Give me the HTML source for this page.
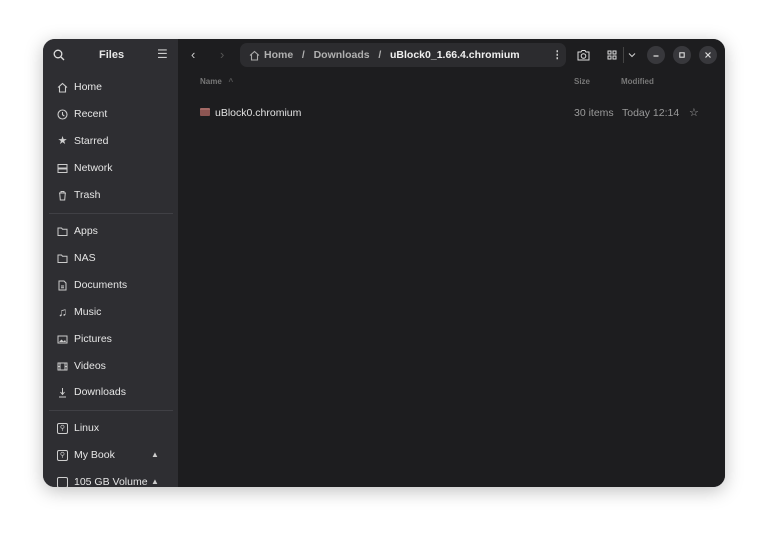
<!DOCTYPE html>
<html><head><meta charset="utf-8"><style>
*{box-sizing:border-box;margin:0;padding:0}
body{width:768px;height:535px;background:#fff;font-family:"Liberation Sans",sans-serif;position:relative;overflow:hidden}
.win{position:absolute;left:43px;top:39px;width:682px;height:448px;border-radius:12px;overflow:hidden;background:#1e1e20;box-shadow:0 4px 18px rgba(0,0,0,.25)}
.side{position:absolute;left:0;top:0;width:135px;height:100%;background:#2e2e32}
.main{position:absolute;left:135px;top:0;right:0;bottom:0;background:#1d1d1f}
.t{position:absolute;color:#e8e8e8;font-size:10.5px;white-space:nowrap}
.it{position:absolute;left:14px;color:#e6e6e6;font-size:10.5px;display:flex;align-items:center;gap:6px}
.ic{width:11px;height:11px;display:inline-block;position:relative;color:#cfcfcf;font-size:10px;line-height:11px;text-align:center}
.box{border:1.2px solid #cfcfcf;border-radius:2px}
.sep{position:absolute;left:6px;width:124px;height:1px;background:#404045}
.path{position:absolute;left:62px;top:4px;width:326px;height:24px;background:#2c2c2f;border-radius:7px}
.btn{position:absolute;top:7px;width:18px;height:18px;border-radius:50%;background:#38383c}
.btn svg{position:absolute;left:5px;top:5px}
</style></head><body>
<div class="win">
<div class="side">
 <svg style="position:absolute;left:10px;top:10px" width="12" height="12" viewBox="0 0 12 12"><circle cx="5" cy="5" r="3.8" fill="none" stroke="#ddd" stroke-width="1.3"/><line x1="8" y1="8" x2="11" y2="11" stroke="#ddd" stroke-width="1.3"/></svg>
 <div class="t" style="left:56px;top:10px;font-weight:bold;font-size:11px">Files</div>
 <div class="t" style="left:114px;top:8px;font-size:12px;color:#ccc">☰</div>
 <div class="it" style="top:42px"><svg class="ic" viewBox="0 0 11 11"><path d="M1 5.5L5.5 1.5L10 5.5M2.5 4.5V10H8.5V4.5" fill="none" stroke="#ccc" stroke-width="1.1"/></svg>Home</div>
 <div class="it" style="top:69px"><svg class="ic" viewBox="0 0 11 11"><circle cx="5.5" cy="5.5" r="4.5" fill="none" stroke="#ccc" stroke-width="1.1"/><path d="M5.5 3V5.7L7.3 7" fill="none" stroke="#ccc" stroke-width="1.1"/></svg>Recent</div>
 <div class="it" style="top:96px"><span class="ic" style="font-size:11px">★</span>Starred</div>
 <div class="it" style="top:123px"><svg class="ic" viewBox="0 0 11 11"><rect x="1" y="1.5" width="9" height="3.5" fill="none" stroke="#ccc"/><rect x="1" y="6" width="9" height="3.5" fill="none" stroke="#ccc"/></svg>Network</div>
 <div class="it" style="top:150px"><svg class="ic" viewBox="0 0 11 11"><path d="M2 3H9M4 3V1.5H7V3M2.7 3L3.3 10H7.7L8.3 3" fill="none" stroke="#ccc"/></svg>Trash</div>
 <div class="sep" style="top:174px"></div>
 <div class="it" style="top:186px"><svg class="ic" viewBox="0 0 11 11"><path d="M1 2H4.5L5.5 3.2H10V9.5H1Z" fill="none" stroke="#ccc"/></svg>Apps</div>
 <div class="it" style="top:213px"><svg class="ic" viewBox="0 0 11 11"><path d="M1 2H4.5L5.5 3.2H10V9.5H1Z" fill="none" stroke="#ccc"/></svg>NAS</div>
 <div class="it" style="top:240px"><svg class="ic" viewBox="0 0 11 11"><path d="M2 1H7L9 3V10H2Z M4 6H7M4 7.8H7" fill="none" stroke="#ccc"/></svg>Documents</div>
 <div class="it" style="top:267px"><span class="ic" style="font-size:12px">♫</span>Music</div>
 <div class="it" style="top:294px"><svg class="ic" viewBox="0 0 11 11"><rect x="1" y="2" width="9" height="7" fill="none" stroke="#ccc"/><path d="M2 8L4.5 5.5L6.5 7.5L8 6L9 8Z" fill="#ccc"/></svg>Pictures</div>
 <div class="it" style="top:321px"><svg class="ic" viewBox="0 0 11 11"><rect x="1" y="2" width="9" height="7" fill="none" stroke="#ccc"/><path d="M3 2V9M8 2V9M1 5.5H3M8 5.5H10" stroke="#ccc"/></svg>Videos</div>
 <div class="it" style="top:347px"><svg class="ic" viewBox="0 0 11 11"><path d="M5.5 1V7M3.5 5L5.5 7.5L7.5 5M2 10H9" fill="none" stroke="#ccc"/></svg>Downloads</div>
 <div class="sep" style="top:371px"></div>
 <div class="it" style="top:383px"><span class="ic box" style="font-size:7px;line-height:9px">⚲</span>Linux</div>
 <div class="it" style="top:410px"><span class="ic box" style="font-size:7px;line-height:9px">⚲</span>My Book</div>
 <div class="t" style="left:108px;top:411px;font-size:8px;color:#ccc">▲</div>
 <div class="it" style="top:437px"><span class="ic box"></span>105 GB Volume</div>
 <div class="t" style="left:108px;top:438px;font-size:8px;color:#ccc">▲</div>
</div>
<div class="main">
 <div class="t" style="left:13px;top:8px;font-size:13px;color:#ccc">‹</div>
 <div class="t" style="left:42px;top:8px;font-size:13px;color:#555">›</div>
 <div class="path">
  <svg style="position:absolute;left:9px;top:7px" width="11" height="11" viewBox="0 0 11 11"><path d="M1 5.5L5.5 1.5L10 5.5M2.5 4.5V10H8.5V4.5" fill="none" stroke="#aaa" stroke-width="1.1"/></svg>
  <div class="t" style="left:24px;top:6px;color:#b0b0b0;font-weight:bold">Home&nbsp;&nbsp;&nbsp;/&nbsp;&nbsp;&nbsp;Downloads&nbsp;&nbsp;&nbsp;/&nbsp;&nbsp;&nbsp;<span style="color:#f0f0f0">uBlock0_1.66.4.chromium</span></div>
  <div class="t" style="left:312px;top:6px;color:#ccc;font-weight:bold">⋮</div>
 </div>
 <svg style="position:absolute;left:399px;top:10px" width="13" height="12" viewBox="0 0 13 12"><path d="M1 3H4L5 1.5H8L9 3H12V11H1Z" fill="none" stroke="#ddd"/><circle cx="6.5" cy="7" r="2.3" fill="none" stroke="#ddd"/></svg>
 <svg style="position:absolute;left:429px;top:11px" width="10" height="10" viewBox="0 0 10 10" fill="none" stroke="#ddd"><rect x="1" y="1" width="3" height="3"/><rect x="6" y="1" width="3" height="3"/><rect x="1" y="6" width="3" height="3"/><rect x="6" y="6" width="3" height="3"/></svg>
 <div style="position:absolute;left:445px;top:8px;width:1px;height:16px;background:#444"></div>
 <svg style="position:absolute;left:450px;top:13px" width="8" height="6" viewBox="0 0 8 6"><path d="M1 1.5L4 4.5L7 1.5" fill="none" stroke="#ccc" stroke-width="1.1"/></svg>
 <div class="btn" style="left:469px"><svg width="8" height="8" viewBox="0 0 8 8"><path d="M1.5 5H6.5" stroke="#ddd" stroke-width="1.2"/></svg></div>
 <div class="btn" style="left:495px"><svg width="8" height="8" viewBox="0 0 8 8"><rect x="1.8" y="1.8" width="4.4" height="4.4" fill="none" stroke="#ddd" stroke-width="1.1"/></svg></div>
 <div class="btn" style="left:521px"><svg width="8" height="8" viewBox="0 0 8 8"><path d="M1.5 1.5L6.5 6.5M6.5 1.5L1.5 6.5" stroke="#ddd" stroke-width="1.2"/></svg></div>
 <div class="t" style="left:22px;top:38px;font-size:8px;color:#777;font-weight:bold">Name&nbsp;&nbsp;&nbsp;<span style="color:#555">^</span></div>
 <div class="t" style="left:396px;top:38px;font-size:8px;color:#777;font-weight:bold">Size</div>
 <div class="t" style="left:443px;top:38px;font-size:8px;color:#777;font-weight:bold">Modified</div>
 <div style="position:absolute;left:22px;top:69px;width:10px;height:8px;background:#8c5552;border-radius:1px;border-top:2px solid #a46a66"></div>
 <div class="t" style="left:37px;top:68px;color:#e2e2e2">uBlock0.chromium</div>
 <div class="t" style="left:396px;top:68px;color:#9a9a9a">30 items</div>
 <div class="t" style="left:444px;top:68px;color:#9a9a9a">Today 12:14</div>
 <div class="t" style="left:511px;top:67px;color:#aaa;font-size:11px">☆</div>
</div>
</div>
</body></html>
